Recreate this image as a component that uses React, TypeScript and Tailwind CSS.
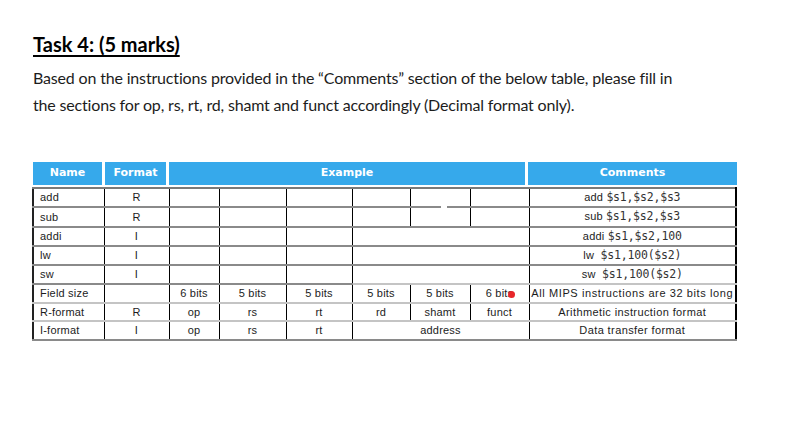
import React from 'react';

const cell = 'border-r border-r-black border-b-2 border-b-[#8a8a8a] text-center';
const cellLight = 'border-r border-r-black border-b-2 border-b-[#c4c4c4] text-center';

function Code({ op, args }: { op: string; args: string }) {
  return (
    <span>
      {op}{' '}
      <span className="font-['DejaVu_Sans_Mono',monospace] text-[11.5px] tracking-[-0.2px] text-[#333]">{args}</span>
    </span>
  );
}

export default function App() {
  const instrRows = [
    { name: 'add', fmt: 'R', split: true, comment: <Code op="add" args="$s1,$s2,$s3" /> },
    { name: 'sub', fmt: 'R', split: true, comment: <Code op="sub" args="$s1,$s2,$s3" /> },
    { name: 'addi', fmt: 'I', split: false, comment: <Code op="addi" args="$s1,$s2,100" /> },
    { name: 'lw', fmt: 'I', split: false, comment: <Code op={'lw\u00a0'} args="$s1,100($s2)" /> },
    { name: 'sw', fmt: 'I', split: false, comment: <Code op={'sw\u00a0'} args="$s1,100($s2)" /> },
  ];

  return (
    <div className="w-[809px] h-[432px] bg-white overflow-hidden pl-[33px] pt-[33px] text-[#1c1c1c]">
      <h1 className="font-['Lato',sans-serif] font-bold text-[20px] leading-[22px] underline decoration-[1.5px] underline-offset-[3px] text-black">
        Task 4: (5 marks)
      </h1>
      <p className="mt-[9px] font-['Lato',sans-serif] text-[16px] leading-[27px] tracking-[-0.17px]">
        Based on the instructions provided in the “Comments” section of the below table, please fill in
        <br />
        the sections for op, rs, rt, rd, shamt and funct accordingly (Decimal format only).
      </p>

      <div className="mt-[44px] font-['Liberation_Sans',Arial,sans-serif] text-[11px] tracking-[0.2px]">
        <div className="flex h-[23px] text-white font-['DejaVu_Sans',sans-serif] font-bold text-[11px] tracking-normal">
          <div className="w-[69px] bg-[#36a9eb] flex items-center justify-center">Name</div>
          <div className="w-[61px] ml-[3px] bg-[#36a9eb] flex items-center justify-center">Format</div>
          <div className="w-[356px] ml-[3px] bg-[#36a9eb] flex items-center justify-center">Example</div>
          <div className="w-[209px] ml-[3px] bg-[#36a9eb] flex items-center justify-center">Comments</div>
        </div>

        <table className="mt-[2px] -ml-[1px] border-collapse table-fixed w-[703px] border-l-2 border-l-[#222] border-t-2 border-t-[#7a7a7a]">
          <colgroup>
            <col className="w-[71px]" />
            <col className="w-[65px]" />
            <col className="w-[50px]" />
            <col className="w-[67px]" />
            <col className="w-[66px]" />
            <col className="w-[58px]" />
            <col className="w-[60px]" />
            <col className="w-[59px]" />
            <col className="w-[207px]" />
          </colgroup>
          <tbody>
            {instrRows.map((r, i) => (
              <tr key={r.name} className="h-[18px]">
                <td className={`${cell} text-left pl-[6px]`}>{r.name}</td>
                <td className={cell}>{r.fmt}</td>
                <td className={cell}></td>
                <td className={cell}></td>
                <td className={cell}></td>
                {r.split ? (
                  <>
                    <td className={cell}></td>
                    <td className={`${cell} relative`}>
                      {i === 0 && <span className="absolute left-[30px] -bottom-[2px] w-[6px] h-[2px] bg-white" />}
                    </td>
                    <td className={cell}></td>
                  </>
                ) : (
                  <td className={i === 4 ? cellLight : cell} colSpan={3}></td>
                )}
                <td className={`${i === 4 ? cellLight : cell} border-r-2`}>{r.comment}</td>
              </tr>
            ))}
            <tr className="h-[18px]">
              <td className={`${cellLight} text-left pl-[6px]`}>Field size</td>
              <td className={cellLight}></td>
              <td className={cellLight}>6 bits</td>
              <td className={cellLight}>5 bits</td>
              <td className={cellLight}>5 bits</td>
              <td className={cellLight}>5 bits</td>
              <td className={cellLight}>5 bits</td>
              <td className={`${cellLight} relative`}>
                6 bits
                <span className="absolute left-[37px] top-[6px] w-[7px] h-[7px] rounded-full bg-[#e8262a]" />
              </td>
              <td className={`${cellLight} border-r-2 whitespace-nowrap tracking-[0.6px]`}>
                All MIPS instructions are 32 bits long
              </td>
            </tr>
            <tr className="h-[18px]">
              <td className={`${cellLight} text-left pl-[6px]`}>R-format</td>
              <td className={cellLight}>R</td>
              <td className={cellLight}>op</td>
              <td className={cellLight}>rs</td>
              <td className={cellLight}>rt</td>
              <td className={cellLight}>rd</td>
              <td className={cellLight}>shamt</td>
              <td className={cellLight}>funct</td>
              <td className={`${cellLight} border-r-2 tracking-[0.4px]`}>Arithmetic instruction format</td>
            </tr>
            <tr className="h-[18px]">
              <td className={`${cell} text-left pl-[6px]`}>I-format</td>
              <td className={cell}>I</td>
              <td className={cell}>op</td>
              <td className={cell}>rs</td>
              <td className={cell}>rt</td>
              <td className={cell} colSpan={3}>address</td>
              <td className={`${cell} border-r-2 tracking-[0.4px]`}>Data transfer format</td>
            </tr>
          </tbody>
        </table>
      </div>
    </div>
  );
}
